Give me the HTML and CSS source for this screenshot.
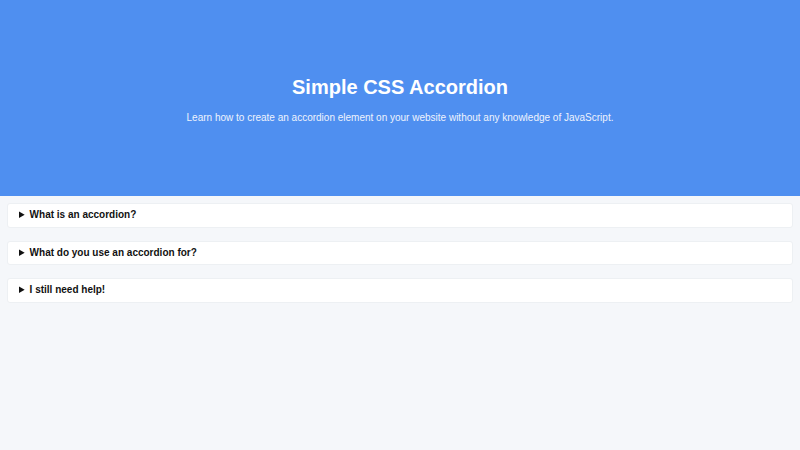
FILE: index.html
```html
<!DOCTYPE html>
<html>
<head>
	<title>Simple CSS Accordion</title>
	<link rel="stylesheet" href="styles.css">
</head>
<body>

	<header class="hero">
		<h1>Simple CSS Accordion</h1>
		<p>Learn how to create an accordion element on your website without any knowledge of JavaScript.</p>
	</header>

	<main class="accordion">
		<details class="item">
			<summary>What is an accordion?</summary>
			<p>An accordion is a list of headers that can be clicked to show or hide the content under them.</p>
		</details>
		<details class="item">
			<summary>What do you use an accordion for?</summary>
			<p>Accordions keep long pages short, like FAQ sections or settings panels.</p>
		</details>
		<details class="item">
			<summary>I still need help!</summary>
			<p>Send us a message and we will get back to you.</p>
		</details>
	</main>

</body>
</html>
```

FILE: styles.css
```css
body{
	margin: 0;
	background: #f5f7fa;
	font-family: "Liberation Sans", Arial, sans-serif;
	color: #111;
}

.hero{
	background: #4f8ff0;
	color: white;
	text-align: center;
	height: 196px;
	box-sizing: border-box;
	padding-top: 76px;
}

.hero h1{
	font-size: 20px;
	line-height: 23px;
	margin: 0 0 13px;
}

.hero p{
	font-size: 10px;
	line-height: 12px;
	margin: 0;
	color: #eef3fd;
}

.accordion{
	display: flex;
	flex-direction: column;
	gap: 13px;
	padding: 7px 7px;
}

.item{
	background: white;
	border: 1px solid #edf0f3;
	border-radius: 3px;
}

.item summary{
	font-size: 10px;
	font-weight: bold;
	padding: 4px 11px;
	line-height: 14.5px;
	cursor: pointer;
}

.item p{
	font-size: 10px;
	margin: 0;
	padding: 4px 12px 10px;
}
```
